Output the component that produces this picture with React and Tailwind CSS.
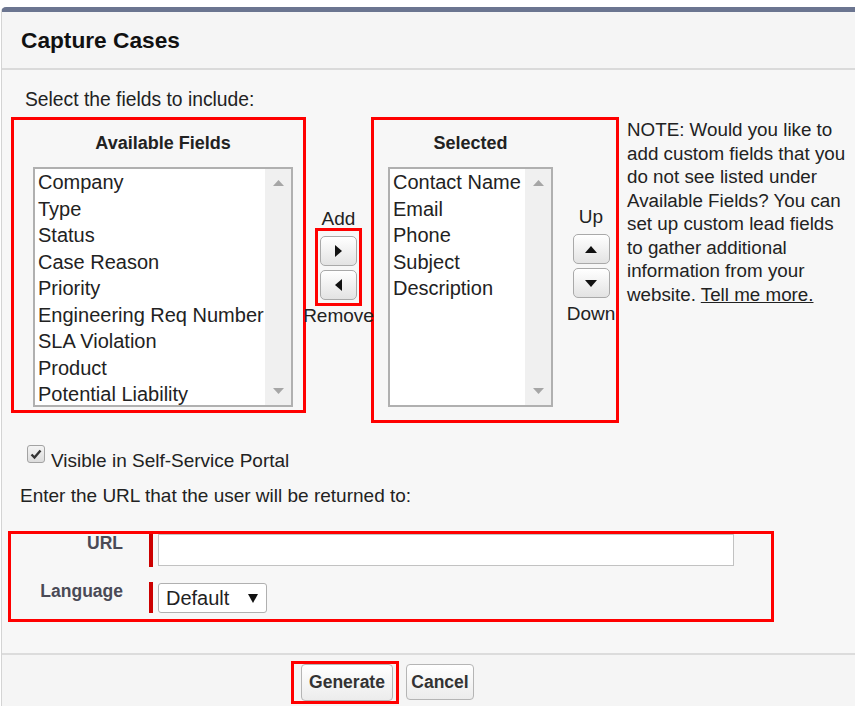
import React from 'react';

const available = [
  'Company',
  'Type',
  'Status',
  'Case Reason',
  'Priority',
  'Engineering Req Number',
  'SLA Violation',
  'Product',
  'Potential Liability',
];
const selected = ['Contact Name', 'Email', 'Phone', 'Subject', 'Description'];

function Arrow({ dir }) {
  const paths = {
    up: 'M6 0L12 7H0z',
    down: 'M0 0H12L6 7z',
    right: 'M0 0L7 6L0 12z',
    left: 'M7 0V12L0 6z',
  };
  const vertical = dir === 'up' || dir === 'down';
  return (
    <svg width={vertical ? 12 : 7} height={vertical ? 7 : 12} viewBox={vertical ? '0 0 12 7' : '0 0 7 12'}>
      <path d={paths[dir]} fill="#111" />
    </svg>
  );
}

function SmallBtn({ dir }) {
  return (
    <div className="flex h-[30px] w-[37px] items-center justify-center rounded-[5px] border border-[#a9a9a9] bg-linear-to-b from-white to-[#e3e3e3] shadow-[inset_0_1px_0_#fff]">
      <Arrow dir={dir} />
    </div>
  );
}

function ListBox({ items, className }) {
  return (
    <div className={`flex h-[240px] border-2 border-[#b0b0b0] bg-white ${className}`}>
      <div className="flex-1 overflow-hidden whitespace-nowrap pl-[3px] text-[20px] leading-[26.5px] text-[#222]">
        {items.map((i) => (
          <div key={i}>{i}</div>
        ))}
      </div>
      <div className="flex w-[26px] flex-col items-center justify-between bg-[#f0f0f0] py-[11px]">
        <svg width="11" height="6" viewBox="0 0 11 6">
          <path d="M5.5 0L11 6H0z" fill="#a6a6a6" />
        </svg>
        <svg width="11" height="6" viewBox="0 0 11 6">
          <path d="M0 0H11L5.5 6z" fill="#a6a6a6" />
        </svg>
      </div>
    </div>
  );
}

function GrayButton({ children, className = '' }) {
  return (
    <div
      className={`flex items-center justify-center rounded-[4px] border border-[#b5b5b5] bg-linear-to-b from-white to-[#ececec] text-[17.5px] font-bold text-[#333] ${className}`}
    >
      {children}
    </div>
  );
}

export default function App() {
  return (
    <div className="relative h-[706px] w-[855px] overflow-hidden bg-white font-['Liberation_Sans',Arial,sans-serif] text-[#222]">
      <div className="ml-[1px] mt-[7px] h-[699px] rounded-tl-[5px] border-l border-t-[5px] border-l-[#d4d4d4] border-t-[#6b7590] bg-[#f5f5f5]">
        {/* Header */}
        <div className="flex h-[58px] items-center border-b-2 border-[#dadada] pl-[19px]">
          <h1 className="text-[22.7px] font-bold text-[#111]">Capture Cases</h1>
        </div>

        {/* Body */}
        <div className="bg-[#f7f7f7] pt-[19px]">
          <div className="ml-[23px] text-[19.3px] leading-[22px]">Select the fields to include:</div>

          <div className="mt-[6px] flex items-start">
            {/* Available */}
            <div className="ml-[9px] h-[296px] w-[295px] border-[3px] border-[#f00] pl-[19px] pr-[10px] pt-[12px]">
              <div className="text-center text-[18px] font-bold leading-[22px]">Available Fields</div>
              <ListBox items={available} className="mt-[13px] w-full" />
            </div>

            {/* Add / Remove */}
            <div className="flex w-[65px] flex-col items-center pt-[92px]">
              <div className="text-[19px] leading-[19px]">Add</div>
              <div className="flex flex-col gap-[4px] border-[3px] border-[#f00] px-[2px] pb-[3px] pt-[5px]">
                <SmallBtn dir="right" />
                <SmallBtn dir="left" />
              </div>
              <div className="relative z-10 text-[19px] leading-[20px]">Remove</div>
            </div>

            {/* Selected */}
            <div className="flex h-[306px] w-[248px] border-[3px] border-[#f00] pl-[14px] pt-[12px]">
              <div className="w-[165px]">
                <div className="text-center text-[18px] font-bold leading-[22px]">Selected</div>
                <ListBox items={selected} className="mt-[13px] w-full" />
              </div>
              <div className="ml-[13px] flex w-[50px] flex-col items-center pt-[75px]">
                <div className="text-[19px] leading-[20px]">Up</div>
                <div className="mt-[7px] flex flex-col gap-[4px]">
                  <SmallBtn dir="up" />
                  <SmallBtn dir="down" />
                </div>
                <div className="mt-[6px] text-[19px] leading-[20px]">Down</div>
              </div>
            </div>

            {/* Note */}
            <div className="ml-[8px] mt-[1px] whitespace-nowrap text-[18.8px] leading-[23.5px]">
              NOTE: Would you like to
              <br />
              add custom fields that you
              <br />
              do not see listed under
              <br />
              Available Fields? You can
              <br />
              set up custom lead fields
              <br />
              to gather additional
              <br />
              information from your
              <br />
              website. <span className="underline">Tell me more.</span>
            </div>
          </div>

          {/* Checkbox */}
          <div className="ml-[25px] mt-[22px] flex items-start">
            <div className="flex h-[18px] w-[18px] items-center justify-center rounded-[3px] border border-[#a3a3a3] bg-linear-to-b from-[#f4f4f4] to-[#dcdcdc]">
              <svg width="12" height="11" viewBox="0 0 12 11">
                <path d="M1.5 5.5L4.5 8.5L10.5 1.5" stroke="#333" strokeWidth="2.4" fill="none" />
              </svg>
            </div>
            <div className="ml-[6px] mt-[5px] text-[19px] leading-[22px]">Visible in Self-Service Portal</div>
          </div>

          <div className="ml-[18px] mt-[13px] text-[19px] leading-[22px]">
            Enter the URL that the user will be returned to:
          </div>

          {/* URL / Language */}
          <div className="ml-[6px] mt-[24px] h-[91px] w-[766px] border-[3px] border-[#f00] pb-[6px]">
            <div className="flex h-[33px] items-stretch">
              <div className="w-[112px] text-right text-[17.5px] font-bold leading-[18px] text-[#4a4a56]">URL</div>
              <div className="ml-[26px] w-[4px] bg-[#c00]" />
              <div className="ml-[5px] h-[32px] w-[576px] border border-[#c2c2c2] bg-white" />
            </div>
            <div className="mt-[15px] flex h-[31px] items-stretch">
              <div className="w-[112px] text-right text-[17.5px] font-bold leading-[18px] text-[#4a4a56]">
                Language
              </div>
              <div className="ml-[26px] w-[4px] bg-[#c00]" />
              <div className="ml-[5px] mt-[1px] flex h-[30px] w-[109px] items-center rounded-[3px] border border-[#b0b0b0] bg-white pl-[7px] text-[20px]">
                <span>Default</span>
                <svg className="ml-[19px]" width="10" height="9" viewBox="0 0 10 9">
                  <path d="M0 0H10L5 9z" fill="#111" />
                </svg>
              </div>
            </div>
          </div>

          <div className="mt-[31px] h-[2px] bg-[#dcdcdc]" />
        </div>

        {/* Footer */}
        <div className="flex items-start pl-[289px] pt-[6px]">
          <div className="border-[3px] border-[#f00] pl-[7px] pr-[3px]">
            <GrayButton className="h-[37px] w-[92px]">Generate</GrayButton>
          </div>
          <GrayButton className="ml-[7px] mt-[3px] h-[36px] w-[68px]">Cancel</GrayButton>
        </div>
      </div>
    </div>
  );
}
